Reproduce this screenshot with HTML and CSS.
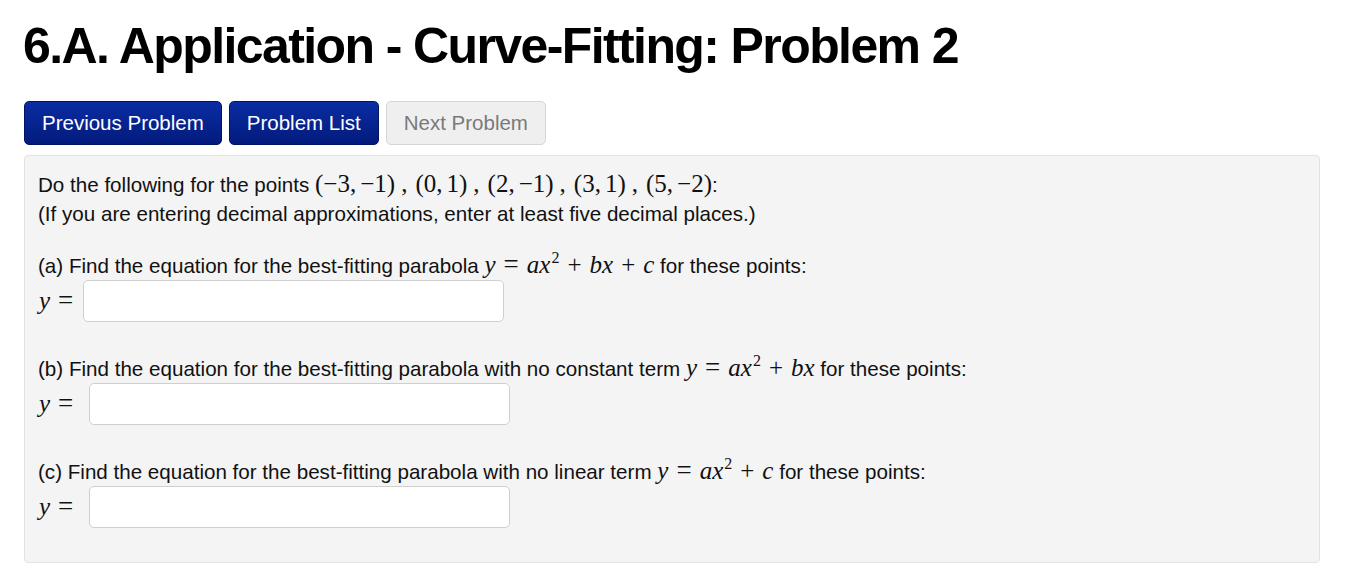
FILE: index.html
```html
<!DOCTYPE html>
<html>
<head>
<meta charset="utf-8">
<link rel="stylesheet" href="styles.css">
</head>
<body>
<h1 class="title">6.A. Application - Curve-Fitting: Problem 2</h1>
<div class="nav">
  <button class="btn btn-primary">Previous Problem</button>
  <button class="btn btn-primary">Problem List</button>
  <button class="btn btn-disabled">Next Problem</button>
</div>
<div class="panel">
  <div class="intro">
    <div class="line">Do the following for the points <span class="math">(−3,<span class="th"></span>−1)<span class="sep">,</span>(0,<span class="th"></span>1)<span class="sep">,</span>(2,<span class="th"></span>−1)<span class="sep">,</span>(3,<span class="th"></span>1)<span class="sep">,</span>(5,<span class="th"></span>−2)</span>:</div>
    <div class="line">(If you are entering decimal approximations, enter at least five decimal places.)</div>
  </div>
  <div class="part part-a">
    <div class="line">(a) Find the equation for the best-fitting parabola <span class="math"><i>y</i><span class="rel">=</span><i>ax</i><sup>2</sup><span class="bin">+</span><i>bx</i><span class="bin">+</span><i>c</i></span> for these points:</div>
    <div class="answer"><span class="math label"><i>y</i><span class="rel">=</span></span><span class="field field-a"></span></div>
  </div>
  <div class="part">
    <div class="line">(b) Find the equation for the best-fitting parabola with no constant term <span class="math"><i>y</i><span class="rel">=</span><i>ax</i><sup>2</sup><span class="bin">+</span><i>bx</i></span> for these points:</div>
    <div class="answer"><span class="math label"><i>y</i><span class="rel">=</span></span><span class="field"></span></div>
  </div>
  <div class="part">
    <div class="line">(c) Find the equation for the best-fitting parabola with no linear term <span class="math"><i>y</i><span class="rel">=</span><i>ax</i><sup>2</sup><span class="bin">+</span><i>c</i></span> for these points:</div>
    <div class="answer"><span class="math label"><i>y</i><span class="rel">=</span></span><span class="field"></span></div>
  </div>
</div>
</body>
</html>
```
FILE: styles.css
```css
html, body {
  margin: 0;
  padding: 0;
  background: #ffffff;
}
body {
  padding: 21px 38px 0 24px;
  font-family: "Liberation Sans", Arial, sans-serif;
  color: #111;
}
.title {
  margin: 0 0 0 -1px;
  font-size: 50px;
  line-height: 50px;
  font-weight: bold;
  color: #000;
  letter-spacing: -1.6px;
}
.nav {
  display: flex;
  gap: 7px;
  margin-top: 30px;
}
.btn {
  height: 44px;
  padding: 0 17px;
  font-family: "Liberation Sans", Arial, sans-serif;
  font-size: 20.5px;
  border-radius: 5px;
  border: 1px solid;
}
.btn-primary {
  color: #fff;
  background: linear-gradient(#0b2da3, #021a7c);
  border-color: #011463;
}
.btn-disabled {
  color: #7a7a7a;
  background: #efefef;
  border-color: #d6d6d6;
}
.panel {
  margin-top: 10px;
  background: #f4f4f4;
  border: 1px solid #e2e2e2;
  border-radius: 4px;
  padding: 13px 13px 34px;
  font-size: 20.6px;
}
.line {
  line-height: 30px;
  height: 30px;
  white-space: nowrap;
}
.math {
  font-family: "Liberation Serif", "Times New Roman", serif;
  font-size: 25px;
}
.math i {
  font-style: italic;
}
.math sup {
  font-size: 16px;
  line-height: 0;
  vertical-align: 10px;
  margin-left: 1px;
}
.th {
  display: inline-block;
  width: 4px;
}
.sep {
  margin: 0 8px 0 6px;
}
.rel {
  margin: 0 8px;
  font-size: 27px;
  line-height: 0;
}
.bin {
  margin: 0 8px;
}
.part {
  margin-top: 31px;
}
.part-a {
  margin-top: 21px;
}
.answer {
  display: flex;
  align-items: center;
  height: 42px;
}
.label {
  width: 51px;
  padding-left: 1px;
  box-sizing: border-box;
}
.field {
  width: 421px;
  height: 42px;
  box-sizing: border-box;
  background: #fff;
  border: 1px solid #cfcfcf;
  border-radius: 5px;
}
.field-a {
  margin-left: -6px;
}
```
